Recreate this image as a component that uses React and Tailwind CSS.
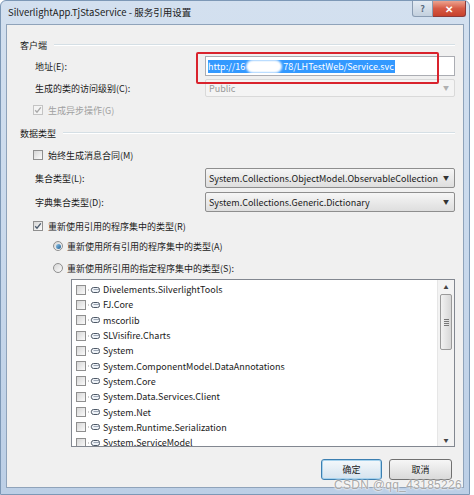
const ASSEMBLIES = [
  "Divelements.SilverlightTools",
  "FJ.Core",
  "mscorlib",
  "SLVisifire.Charts",
  "System",
  "System.ComponentModel.DataAnnotations",
  "System.Core",
  "System.Data.Services.Client",
  "System.Net",
  "System.Runtime.Serialization",
  "System.ServiceModel",
];

function GroupHeader({ label }) {
  return (
    <div className="flex h-[18px] items-center gap-[7px]">
      <span>{label}</span>
      <div className="h-[2px] flex-1 border-t border-b border-t-[#d5dfe5] border-b-white"></div>
    </div>
  );
}

function Check({ checked, disabled }) {
  return (
    <span
      className={
        "flex h-[10px] w-[10px] shrink-0 items-center justify-center border " +
        (disabled ? "border-[#c4c4c4] bg-[#f4f4f4]" : "border-[#8f8f8f] bg-gradient-to-br from-[#d6d6d6] to-[#fbfbfb]")
      }
    >
      {checked && (
        <svg width="8" height="8" viewBox="0 0 8 8">
          <path
            d="M1.2 4.2 L3 6.2 L6.8 1.4"
            fill="none"
            stroke={disabled ? "#a8a8a8" : "#4a5a6c"}
            strokeWidth="1.3"
          />
        </svg>
      )}
    </span>
  );
}

function Radio({ checked }) {
  return (
    <span className="flex h-[10px] w-[10px] shrink-0 items-center justify-center rounded-full border border-[#8f8f8f] bg-gradient-to-br from-[#d6d6d6] to-[#fbfbfb]">
      {checked && <span className="h-[5px] w-[5px] rounded-full bg-gradient-to-br from-[#8ec6ea] to-[#1f5f93]"></span>}
    </span>
  );
}

function Combo({ value, disabled }) {
  return (
    <div
      className={
        "flex h-full flex-1 items-center justify-between rounded-[2px] border pl-[3px] pr-[5px] " +
        (disabled
          ? "border-[#d9d9d9] bg-[#f4f4f4] text-[#9a9a9a]"
          : "border-[#8e8e8e] bg-gradient-to-b from-[#f6f6f6] to-[#dedede]")
      }
    >
      <span>{value}</span>
      <span className={"text-[6px] " + (disabled ? "text-[#b0b0b0]" : "text-[#333]")}>▼</span>
    </div>
  );
}

function AssemblyIcon() {
  return (
    <svg width="12" height="8" viewBox="0 0 12 8" className="shrink-0">
      <path d="M0 4 H2.5" stroke="#9a9a9a" strokeWidth="1" strokeDasharray="1 1" />
      <rect x="3.5" y="1.5" width="8" height="5" rx="2" fill="#eef2f7" stroke="#4d5866" strokeWidth="1" />
      <path d="M5.5 3.5 H11" stroke="#8a96a6" strokeWidth="0.8" />
    </svg>
  );
}

export default function App() {
  return (
    <div className="h-[495px] w-[474px] overflow-hidden bg-white font-['Noto_Sans_CJK_SC',sans-serif] text-[9px] leading-none text-[#1a1a1a]">
      <div className="relative flex h-[495px] w-[470px] flex-col rounded-t-[6px] border border-[#7d98b6] bg-gradient-to-b from-[#d3e0ef] via-[#c9d9ec] to-[#bccfe6] px-[5px] pb-[6px]">
        {/* title bar */}
        <div className="flex h-[23px] items-start justify-between">
          <span className="mt-[7px] pl-[2px] text-[9.5px] text-[#1b1b1b]">SilverlightApp.TjStaService - 服务引用设置</span>
          <div className="-mr-[2px] flex">
            <div className="flex h-[16px] w-[21px] items-center justify-center rounded-bl-[3px] border border-t-0 border-[#8a9cb2] bg-gradient-to-b from-[#e4ebf3] to-[#c3d0de] text-[9px] font-bold text-[#5a6a7e]">
              ?
            </div>
            <div className="flex h-[16px] w-[33px] items-center justify-center rounded-br-[3px] border border-t-0 border-l-0 border-[#8c3a3a] bg-gradient-to-b from-[#eba28f] via-[#d65a45] to-[#c7412c] text-[10px] font-bold text-white">
              ✕
            </div>
          </div>
        </div>

        {/* client area */}
        <div className="flex flex-1 flex-col border border-[#8fa3ba] bg-[#f0f0f0] pl-[13px] pr-[8px] pt-[11px]">
          <GroupHeader label="客户端" />

          <div className="mt-[2px] flex h-[20px] items-center pl-[15px]">
            <span className="w-[170px]">地址(E):</span>
            <div className="flex h-full flex-1 items-center border border-[#abadb3] bg-white pl-[2px]">
              <span className="flex h-[13px] items-center bg-[#3399ff] pr-[1px] text-white">
                http://16
                <span className="mx-[1px] inline-block h-[13px] w-[36px] rounded-full bg-white blur-[1px]"></span>
                78/LHTestWeb/Service.svc
              </span>
            </div>
          </div>

          <div className="mt-[3px] flex h-[18px] items-center pl-[15px]">
            <span className="w-[170px]">生成的类的访问级别(C):</span>
            <Combo value="Public" disabled />
          </div>

          <div className="mt-[4px] flex h-[18px] items-center gap-[5px] pl-[13px] text-[#a0a0a0]">
            <Check checked disabled />
            <span>生成异步操作(G)</span>
          </div>

          <div className="mt-[5px]">
            <GroupHeader label="数据类型" />
          </div>

          <div className="mt-[4px] flex h-[18px] items-center gap-[5px] pl-[13px]">
            <Check />
            <span>始终生成消息合同(M)</span>
          </div>

          <div className="mt-[4px] flex h-[20px] items-center pl-[15px]">
            <span className="w-[170px]">集合类型(L):</span>
            <Combo value="System.Collections.ObjectModel.ObservableCollection" />
          </div>

          <div className="mt-[4px] flex h-[20px] items-center pl-[15px]">
            <span className="w-[170px]">字典集合类型(D):</span>
            <Combo value="System.Collections.Generic.Dictionary" />
          </div>

          <div className="mt-[5px] flex h-[18px] items-center gap-[5px] pl-[13px]">
            <Check checked />
            <span>重新使用引用的程序集中的类型(R)</span>
          </div>

          <div className="mt-[2px] flex h-[18px] items-center gap-[4px] pl-[33px]">
            <Radio checked />
            <span>重新使用所有引用的程序集中的类型(A)</span>
          </div>

          <div className="mt-[4px] flex h-[18px] items-center gap-[4px] pl-[33px]">
            <Radio />
            <span>重新使用所引用的指定程序集中的类型(S):</span>
          </div>

          {/* assembly list */}
          <div className="ml-[51px] mt-[2px] flex h-[168px] overflow-hidden border border-[#828790] bg-white">
            <div className="flex flex-1 flex-col overflow-hidden pl-[4px] pt-[2px]">
              {ASSEMBLIES.map((name) => (
                <div key={name} className="flex h-[15.3px] shrink-0 items-center gap-[2px]">
                  <Check />
                  <AssemblyIcon />
                  <span className="pl-[1px]">{name}</span>
                </div>
              ))}
            </div>
            <div className="flex w-[17px] flex-col items-center border-l border-[#e6e6e6] bg-[#f3f3f3]">
              <span className="mt-[4px] h-[9px] text-[5px] text-[#444]">▲</span>
              <div className="mt-[1px] flex h-[56px] w-[12px] items-center justify-center rounded-[2px] border border-[#9a9a9a] bg-gradient-to-r from-[#f2f2f2] to-[#d7d7d7]">
                <div className="flex flex-col gap-[1px]">
                  <span className="h-px w-[5px] bg-[#777]"></span>
                  <span className="h-px w-[5px] bg-[#777]"></span>
                  <span className="h-px w-[5px] bg-[#777]"></span>
                  <span className="h-px w-[5px] bg-[#777]"></span>
                </div>
              </div>
              <div className="flex-1"></div>
              <span className="mb-[4px] text-[5px] text-[#444]">▼</span>
            </div>
          </div>

          <div className="mt-[12px] flex h-[21px] justify-end gap-[7px] pr-[3px]">
            <div className="flex w-[61px] items-center justify-center rounded-[3px] border border-[#3c7fb1] bg-gradient-to-b from-[#f4f8fb] to-[#d5e3ee] shadow-[inset_0_0_0_1px_#a6d2ed]">
              确定
            </div>
            <div className="flex w-[63px] items-center justify-center rounded-[3px] border border-[#707070] bg-gradient-to-b from-[#f6f6f6] to-[#dadada]">
              取消
            </div>
          </div>
        </div>

        {/* annotation box */}
        <div className="absolute left-[195px] top-[51px] h-[32px] w-[243px] rounded-[2px] border-2 border-[#d9232d]"></div>

        {/* watermark */}
        <div className="absolute bottom-[3px] right-[7px] font-['Liberation_Sans',sans-serif] text-[12px] tracking-[0.3px] text-[#a8a8a8] [text-shadow:0_0_2px_#fff,0_0_2px_#fff]">
          CSDN @qq_43185226
        </div>
      </div>
    </div>
  );
}
